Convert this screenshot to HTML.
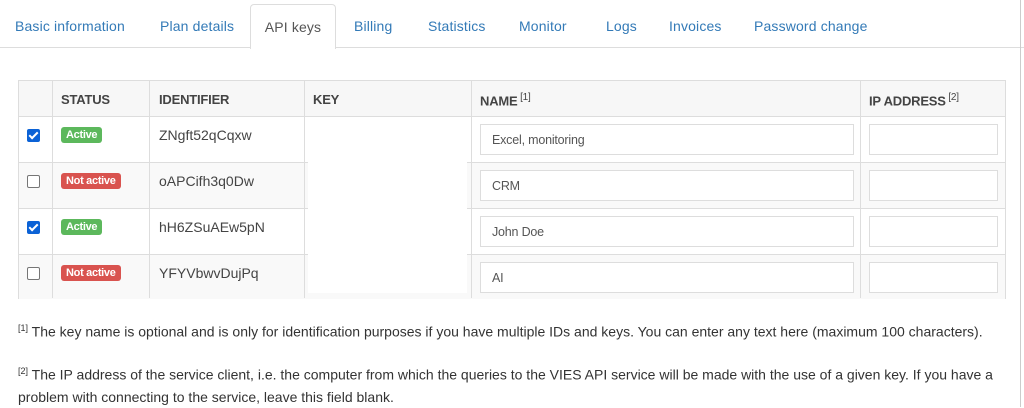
<!DOCTYPE html>
<html><head><style>
*{box-sizing:border-box;margin:0;padding:0}
body{width:1024px;height:407px;background:#fff;font-family:"Liberation Sans",sans-serif;color:#333;position:relative;overflow:hidden}
.tabs{position:absolute;left:0;top:0;width:1024px;height:48px;border-bottom:1px solid #ddd}
.tab{position:absolute;top:18px;font-size:14px;color:#337ab7;letter-spacing:0.15px}
.act{position:absolute;left:250px;top:4px;width:86px;height:45px;background:#fff;border:1px solid #ddd;border-bottom:none;border-radius:4px 4px 0 0;color:#555;font-size:14px;text-align:center;padding-top:14px;letter-spacing:0.15px}
.sb{position:absolute;left:1020px;top:0;width:1px;height:407px;background:#ccc}
.t{position:absolute;left:18px;top:80px;width:988px;border:1px solid #ddd;height:219px}
.c{position:absolute;border-left:1px solid #ddd;top:0;height:217px}
.r{position:absolute;left:0;width:986px;border-top:1px solid #ddd}
.h{position:absolute;top:11px;font-size:13px;font-weight:bold;color:#444;letter-spacing:-0.2px}
.h sup{font-weight:normal;font-size:10px}
.cb{position:absolute;left:8px;width:13px;height:13px;border:1.5px solid #767676;border-radius:2px;background:#fff}
.cb.on{background:#0b62d6;border-color:#0b62d6}
.cb.on:after{content:"";position:absolute;left:3px;top:0px;width:3px;height:7px;border:solid #fff;border-width:0 2px 2px 0;transform:rotate(45deg)}
.b{position:absolute;left:42px;font-size:11px;font-weight:bold;color:#fff;padding:2px 5px;border-radius:3px;letter-spacing:-0.3px}
.g{background:#5cb85c}.rd{background:#d9534f}
.id{position:absolute;left:140px;font-size:14px;color:#444}
.in{position:absolute;height:31px;border:1px solid #ddd;background:#fff;font-size:12.5px;color:#555;padding:8px 0 0 11px;letter-spacing:-0.2px}
.fn{position:absolute;left:18px;font-size:14px;color:#333;letter-spacing:0;line-height:22px;width:975px}
.fn sup{font-size:9px}
</style></head><body>
<div class="tabs">
<span class="tab" style="left:15px">Basic information</span>
<span class="tab" style="left:160px">Plan details</span>
<span class="tab" style="left:354px">Billing</span>
<span class="tab" style="left:428px">Statistics</span>
<span class="tab" style="left:519px">Monitor</span>
<span class="tab" style="left:606px">Logs</span>
<span class="tab" style="left:669px">Invoices</span>
<span class="tab" style="left:754px">Password change</span>
</div>
<div class="act">API keys</div>
<div class="sb"></div>
<div class="t">
<div style="position:absolute;left:0;top:0;width:986px;height:35px;background:#f7f7f7"></div>
<div style="position:absolute;left:0;top:81px;width:986px;height:46px;background:#f9f9f9"></div>
<div style="position:absolute;left:0;top:173px;width:986px;height:45px;background:#f9f9f9"></div>
<div class="r" style="top:35px"></div>
<div class="r" style="top:81px"></div>
<div class="r" style="top:127px"></div>
<div class="r" style="top:173px"></div>
<div class="c" style="left:33px"></div>
<div class="c" style="left:130px"></div>
<div class="c" style="left:285px"></div>
<div class="c" style="left:452px"></div>
<div class="c" style="left:841px"></div>
<div style="position:absolute;left:289px;top:36px;width:159px;height:176px;background:#fff"></div>
<div class="h" style="left:42px">STATUS</div>
<div class="h" style="left:140px">IDENTIFIER</div>
<div class="h" style="left:294px">KEY</div>
<div class="h" style="left:461px">NAME<sup> [1]</sup></div>
<div class="h" style="left:850px">IP ADDRESS<sup> [2]</sup></div>

<div class="cb on" style="top:48px"></div><div class="b g" style="top:46px">Active</div><div class="id" style="top:46px">ZNgft52qCqxw</div>
<div class="cb" style="top:94px"></div><div class="b rd" style="top:92px">Not active</div><div class="id" style="top:92px">oAPCifh3q0Dw</div>
<div class="cb on" style="top:140px"></div><div class="b g" style="top:138px">Active</div><div class="id" style="top:138px">hH6ZSuAEw5pN</div>
<div class="cb" style="top:186px"></div><div class="b rd" style="top:184px">Not active</div><div class="id" style="top:184px">YFYVbwvDujPq</div>

<div class="in" style="left:461px;top:43px;width:374px">Excel, monitoring</div>
<div class="in" style="left:461px;top:89px;width:374px">CRM</div>
<div class="in" style="left:461px;top:135px;width:374px">John Doe</div>
<div class="in" style="left:461px;top:181px;width:374px">AI</div>
<div class="in" style="left:850px;top:43px;width:129px"></div>
<div class="in" style="left:850px;top:89px;width:129px"></div>
<div class="in" style="left:850px;top:135px;width:129px"></div>
<div class="in" style="left:850px;top:181px;width:129px"></div>
</div>
<div class="fn" style="top:317px"><sup>[1]</sup> The key name is optional and is only for identification purposes if you have multiple IDs and keys. You can enter any text here (maximum 100 characters).</div>
<div class="fn" style="top:360px"><sup>[2]</sup> The IP address of the service client, i.e. the computer from which the queries to the VIES API service will be made with the use of a given key. If you have a problem with connecting to the service, leave this field blank.</div>
</body></html>
